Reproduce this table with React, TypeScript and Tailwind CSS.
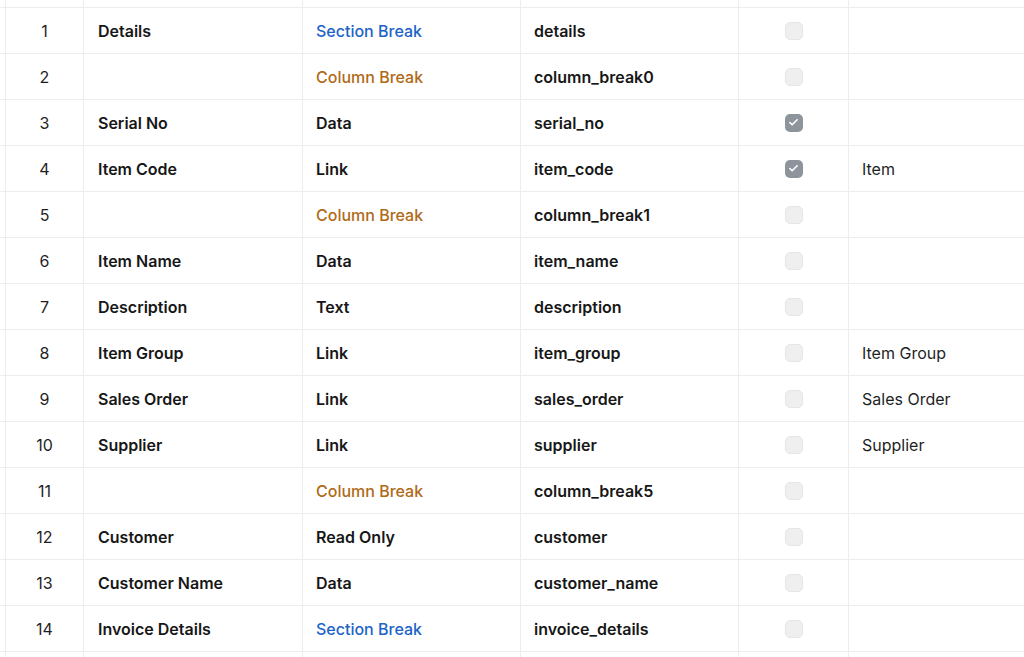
import { Check } from "lucide-react";

type Row = {
  idx: number;
  label: string;
  type: string;
  name: string;
  reqd: boolean;
  options: string;
};

const rows: Row[] = [
  { idx: 1, label: "Details", type: "Section Break", name: "details", reqd: false, options: "" },
  { idx: 2, label: "", type: "Column Break", name: "column_break0", reqd: false, options: "" },
  { idx: 3, label: "Serial No", type: "Data", name: "serial_no", reqd: true, options: "" },
  { idx: 4, label: "Item Code", type: "Link", name: "item_code", reqd: true, options: "Item" },
  { idx: 5, label: "", type: "Column Break", name: "column_break1", reqd: false, options: "" },
  { idx: 6, label: "Item Name", type: "Data", name: "item_name", reqd: false, options: "" },
  { idx: 7, label: "Description", type: "Text", name: "description", reqd: false, options: "" },
  { idx: 8, label: "Item Group", type: "Link", name: "item_group", reqd: false, options: "Item Group" },
  { idx: 9, label: "Sales Order", type: "Link", name: "sales_order", reqd: false, options: "Sales Order" },
  { idx: 10, label: "Supplier", type: "Link", name: "supplier", reqd: false, options: "Supplier" },
  { idx: 11, label: "", type: "Column Break", name: "column_break5", reqd: false, options: "" },
  { idx: 12, label: "Customer", type: "Read Only", name: "customer", reqd: false, options: "" },
  { idx: 13, label: "Customer Name", type: "Data", name: "customer_name", reqd: false, options: "" },
  { idx: 14, label: "Invoice Details", type: "Section Break", name: "invoice_details", reqd: false, options: "" },
  { idx: 15, label: "", type: "", name: "", reqd: false, options: "" },
];

function typeColor(t: string) {
  if (t === "Section Break") return "text-[#1c64c8] font-medium";
  if (t === "Column Break") return "text-[#b06a17] font-medium";
  return "text-[#171717] font-semibold";
}

function Checkbox({ checked }: { checked: boolean }) {
  if (checked) {
    return (
      <div className="w-[18px] h-[18px] rounded-[5px] bg-[#8e949b] flex items-center justify-center">
        <Check className="w-[11px] h-[11px] text-white" strokeWidth={3.5} />
      </div>
    );
  }
  return <div className="w-[18px] h-[18px] rounded-[5px] bg-[#efefef] border border-[#e6e6e6]" />;
}

const grid = "grid grid-cols-[6px_78px_219px_218px_218px_110px_1fr] h-[46px] border-b border-[#ededed]";
const cell = "border-r border-[#ededed] flex items-center";

function TableRow({ row }: { row: Row | null }) {
  return (
    <div className={grid}>
      <div className={cell} />
      <div className={`${cell} justify-center text-[#1f1f1f]`}>{row && row.name ? row.idx : ""}</div>
      <div className={`${cell} pl-[14px] font-semibold text-[#171717]`}>{row?.label}</div>
      <div className={`${cell} pl-[13px] ${row ? typeColor(row.type) : ""}`}>{row?.type}</div>
      <div className={`${cell} pl-[13px] font-semibold text-[#171717]`}>{row?.name}</div>
      <div className={`${cell} justify-center`}>{row && row.name ? <Checkbox checked={row.reqd} /> : null}</div>
      <div className="flex items-center pl-[13px] text-[#1f1f1f]">{row?.options}</div>
    </div>
  );
}

export default function App() {
  return (
    <div
      className="w-[1024px] h-[657px] overflow-hidden bg-white text-[16px]"
      style={{ fontFamily: "Inter, 'Noto Sans', sans-serif" }}
    >
      <div className="-mt-[38px]">
        <TableRow row={null} />
        {rows.map((r) => (
          <TableRow key={r.idx} row={r} />
        ))}
      </div>
    </div>
  );
}
